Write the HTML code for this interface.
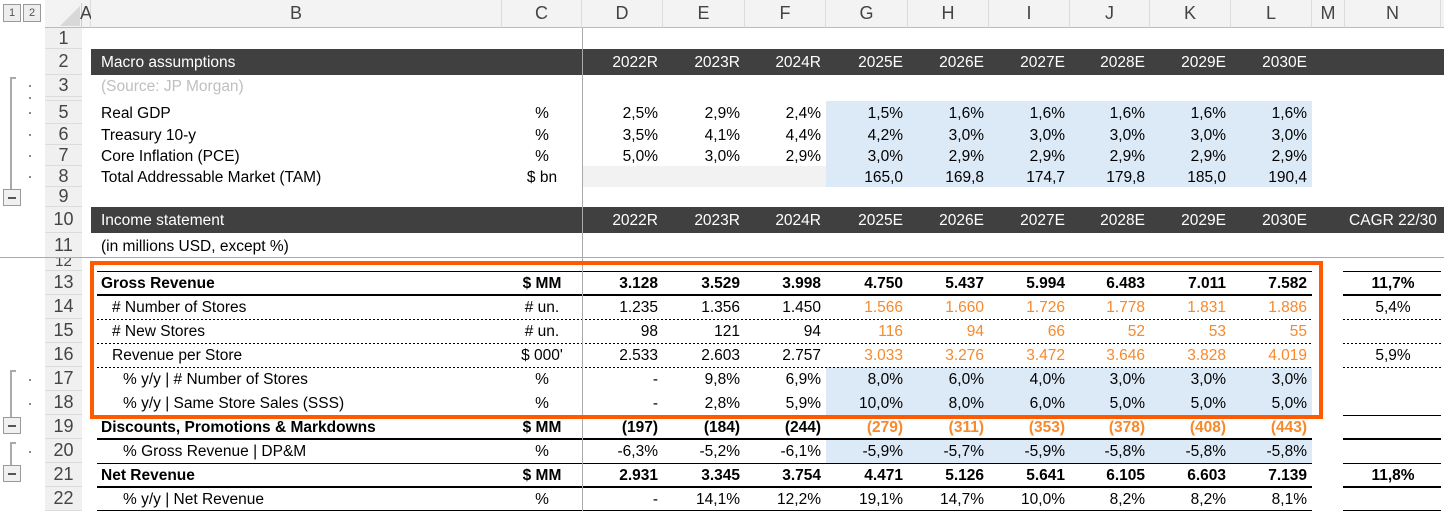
<!DOCTYPE html>
<html><head><meta charset="utf-8"><style>
*{margin:0;padding:0;box-sizing:border-box}
body{width:1444px;height:511px;overflow:hidden;background:#fff;font-family:"Liberation Sans",Arial,sans-serif;font-size:15.5px;color:#000;position:relative}
.a{position:absolute}
.r{position:absolute;left:0;width:1444px}
.r span{position:absolute;top:1px;height:100%;display:flex;align-items:center;white-space:nowrap}
.b{left:101px}.b2{left:112px}.b3{left:123px}
.c{left:502px;width:80px;justify-content:center}
.d,.e,.f,.g,.h,.i,.j,.k,.l{justify-content:flex-end;width:78px}
.d{left:580px}.e{left:662px}.f{left:743px}.g{left:825px}.h{left:906px}.i{left:987px}.j{left:1067px}.k{left:1148px}.l{left:1229px}
.n{left:1345px;width:96px;justify-content:center}
.bo{font-weight:bold}
.o{color:#f7892b}
.gr{color:#bfbfbf}
.w{color:#fff}
.rh{position:absolute;left:45px;width:37px;text-align:center;color:#444;font-size:18px;background:#f0f0f0;border-bottom:1px solid #dcdcdc;display:flex;align-items:center;justify-content:center;overflow:hidden}
.ch{position:absolute;top:0;height:28px;color:#444;font-size:18px;display:flex;align-items:center;justify-content:center;border-right:1px solid #dcdcdc;background:#f3f3f3;border-bottom:1px solid #bbb}
.ln{position:absolute;height:0}
.t1{border-top:1px solid #000}.t2{border-top:2px solid #000}
.dt{height:1px;background:repeating-linear-gradient(90deg,#000 0 2px,transparent 2px 4px)}
.btn{position:absolute;left:3px;width:18px;height:17px;border:1px solid #999;background:#f0f0f0}
.btn:after{content:"";position:absolute;left:4px;top:7px;width:8px;height:2px;background:#555}
.dot{position:absolute;left:29px;width:2px;height:2px;background:#888}
</style></head><body>
<div class="a" style="left:0;top:0;width:1444px;height:28px;background:#f3f3f3;border-bottom:1px solid #bbb"></div>
<div class="a" style="left:0;top:0;width:45px;height:28px;background:#fff"></div>
<div class="a" style="left:3px;top:4px;width:18px;height:18px;border:1px solid #999;background:#eee;font-size:11px;color:#555;text-align:center;line-height:16px">1</div>
<div class="a" style="left:23px;top:4px;width:18px;height:18px;border:1px solid #999;background:#eee;font-size:11px;color:#555;text-align:center;line-height:16px">2</div>
<svg class="a" style="left:58px;top:6px" width="22" height="20"><polygon points="22,0 22,20 2,20" fill="#d8d8d8"/></svg>
<div class="a" style="left:81px;top:3px;width:1px;height:25px;background:#ccc"></div>
<div class="ch" style="left:82px;width:9px">A</div>
<div class="ch" style="left:91px;width:411px">B</div>
<div class="ch" style="left:502px;width:80px">C</div>
<div class="ch" style="left:582px;width:81px">D</div>
<div class="ch" style="left:663px;width:82px">E</div>
<div class="ch" style="left:745px;width:81px">F</div>
<div class="ch" style="left:826px;width:82px">G</div>
<div class="ch" style="left:908px;width:81px">H</div>
<div class="ch" style="left:989px;width:81px">I</div>
<div class="ch" style="left:1070px;width:80px">J</div>
<div class="ch" style="left:1150px;width:81px">K</div>
<div class="ch" style="left:1231px;width:81px">L</div>
<div class="ch" style="left:1312px;width:33px">M</div>
<div class="ch" style="left:1345px;width:96px">N</div>

<div class="a" style="left:45px;top:28px;width:37px;height:483px;background:#f0f0f0;border-right:1px solid #bbb"></div>
<div class="rh" style="top:28px;height:21px">1</div>
<div class="rh" style="top:49px;height:26px">2</div>
<div class="rh" style="top:75px;height:22px">3</div>
<div class="rh" style="top:97px;height:4px"></div>
<div class="rh" style="top:101px;height:23px">5</div>
<div class="rh" style="top:124px;height:21px">6</div>
<div class="rh" style="top:145px;height:21px">7</div>
<div class="rh" style="top:166px;height:21px">8</div>
<div class="rh" style="top:187px;height:20px">9</div>
<div class="rh" style="top:207px;height:26px">10</div>
<div class="rh" style="top:233px;height:25px">11</div>
<div class="rh" style="top:258px;height:13px;font-size:15px;align-items:flex-end">12</div>
<div class="rh" style="top:271px;height:24px">13</div>
<div class="rh" style="top:295px;height:24px">14</div>
<div class="rh" style="top:319px;height:24px">15</div>
<div class="rh" style="top:343px;height:24px">16</div>
<div class="rh" style="top:367px;height:24px">17</div>
<div class="rh" style="top:391px;height:24px">18</div>
<div class="rh" style="top:415px;height:24px">19</div>
<div class="rh" style="top:439px;height:24px">20</div>
<div class="rh" style="top:463px;height:24px">21</div>
<div class="rh" style="top:487px;height:24px">22</div>

<div class="a" style="left:10px;top:77px;width:6px;height:120px;border-left:2px solid #aaa;border-top:2px solid #aaa"></div>
<div class="dot" style="top:85px"></div><div class="dot" style="top:97px"></div><div class="dot" style="top:112px"></div><div class="dot" style="top:134px"></div><div class="dot" style="top:155px"></div><div class="dot" style="top:176px"></div>
<div class="btn" style="top:189px"></div>
<div class="a" style="left:10px;top:370px;width:6px;height:47px;border-left:2px solid #aaa;border-top:2px solid #aaa"></div>
<div class="dot" style="top:379px"></div><div class="dot" style="top:403px"></div>
<div class="btn" style="top:417px"></div>
<div class="a" style="left:10px;top:442px;width:6px;height:23px;border-left:2px solid #aaa;border-top:2px solid #aaa"></div>
<div class="dot" style="top:451px"></div>
<div class="btn" style="top:465px"></div>

<div class="a" style="left:91px;top:49px;width:1353px;height:26px;background:#404040"></div>
<div class="a" style="left:91px;top:207px;width:1353px;height:26px;background:#404040"></div>
<div class="a" style="left:826px;top:101px;width:486px;height:86px;background:#dce9f7"></div>
<div class="a" style="left:582px;top:166px;width:244px;height:21px;background:#f2f2f2"></div>
<div class="a" style="left:826px;top:367px;width:486px;height:48px;background:#dce9f7"></div>
<div class="a" style="left:826px;top:439px;width:486px;height:24px;background:#dce9f7"></div>

<div class="ln t1" style="left:97px;top:271px;width:1215px"></div><div class="ln t1" style="left:1343px;top:271px;width:98px"></div>
<div class="ln t2" style="left:97px;top:294px;width:1215px"></div><div class="ln t2" style="left:1343px;top:294px;width:98px"></div>
<div class="ln dt" style="left:97px;top:319px;width:1215px"></div><div class="ln dt" style="left:1343px;top:319px;width:98px"></div>
<div class="ln dt" style="left:97px;top:343px;width:1215px"></div><div class="ln dt" style="left:1343px;top:343px;width:98px"></div>
<div class="ln dt" style="left:97px;top:367px;width:1215px"></div><div class="ln dt" style="left:1343px;top:367px;width:98px"></div>
<div class="ln t1" style="left:97px;top:415px;width:1215px"></div><div class="ln t1" style="left:1343px;top:415px;width:98px"></div>
<div class="ln t2" style="left:97px;top:438px;width:1215px"></div><div class="ln t2" style="left:1343px;top:438px;width:98px"></div>
<div class="ln t1" style="left:97px;top:463px;width:1215px"></div><div class="ln t1" style="left:1343px;top:463px;width:98px"></div>
<div class="ln t2" style="left:97px;top:486px;width:1215px"></div><div class="ln t2" style="left:1343px;top:486px;width:98px"></div>
<div class="ln t1" style="left:97px;top:510px;width:1215px"></div><div class="ln t1" style="left:1343px;top:510px;width:98px"></div>

<div class="a" style="left:582px;top:28px;width:1px;height:483px;background:#aaa"></div>
<div class="a" style="left:0;top:257px;width:1444px;height:1px;background:#aaa"></div>

<div class="r w" style="top:49px;height:26px"><span class="b">Macro assumptions</span><span class="d">2022R</span><span class="e">2023R</span><span class="f">2024R</span><span class="g">2025E</span><span class="h">2026E</span><span class="i">2027E</span><span class="j">2028E</span><span class="k">2029E</span><span class="l">2030E</span></div>
<div class="r gr" style="top:75px;height:22px"><span class="b">(Source: JP Morgan)</span></div>
<div class="r" style="top:101px;height:23px"><span class="b">Real GDP</span><span class="c">%</span><span class="d">2,5%</span><span class="e">2,9%</span><span class="f">2,4%</span><span class="g">1,5%</span><span class="h">1,6%</span><span class="i">1,6%</span><span class="j">1,6%</span><span class="k">1,6%</span><span class="l">1,6%</span></div>
<div class="r" style="top:124px;height:21px"><span class="b">Treasury 10-y</span><span class="c">%</span><span class="d">3,5%</span><span class="e">4,1%</span><span class="f">4,4%</span><span class="g">4,2%</span><span class="h">3,0%</span><span class="i">3,0%</span><span class="j">3,0%</span><span class="k">3,0%</span><span class="l">3,0%</span></div>
<div class="r" style="top:145px;height:21px"><span class="b">Core Inflation (PCE)</span><span class="c">%</span><span class="d">5,0%</span><span class="e">3,0%</span><span class="f">2,9%</span><span class="g">3,0%</span><span class="h">2,9%</span><span class="i">2,9%</span><span class="j">2,9%</span><span class="k">2,9%</span><span class="l">2,9%</span></div>
<div class="r" style="top:166px;height:21px"><span class="b">Total Addressable Market (TAM)</span><span class="c">$ bn</span><span class="g">165,0</span><span class="h">169,8</span><span class="i">174,7</span><span class="j">179,8</span><span class="k">185,0</span><span class="l">190,4</span></div>
<div class="r w" style="top:207px;height:26px"><span class="b">Income statement</span><span class="d">2022R</span><span class="e">2023R</span><span class="f">2024R</span><span class="g">2025E</span><span class="h">2026E</span><span class="i">2027E</span><span class="j">2028E</span><span class="k">2029E</span><span class="l">2030E</span><span class="n">CAGR 22/30</span></div>
<div class="r" style="top:233px;height:25px"><span class="b">(in millions USD, except %)</span></div>

<div class="r bo" style="top:271px;height:24px"><span class="b">Gross Revenue</span><span class="c">$ MM</span><span class="d">3.128</span><span class="e">3.529</span><span class="f">3.998</span><span class="g">4.750</span><span class="h">5.437</span><span class="i">5.994</span><span class="j">6.483</span><span class="k">7.011</span><span class="l">7.582</span><span class="n">11,7%</span></div>
<div class="r" style="top:295px;height:24px"><span class="b2"># Number of Stores</span><span class="c"># un.</span><span class="d">1.235</span><span class="e">1.356</span><span class="f">1.450</span><span class="g o">1.566</span><span class="h o">1.660</span><span class="i o">1.726</span><span class="j o">1.778</span><span class="k o">1.831</span><span class="l o">1.886</span><span class="n">5,4%</span></div>
<div class="r" style="top:319px;height:24px"><span class="b2"># New Stores</span><span class="c"># un.</span><span class="d">98</span><span class="e">121</span><span class="f">94</span><span class="g o">116</span><span class="h o">94</span><span class="i o">66</span><span class="j o">52</span><span class="k o">53</span><span class="l o">55</span></div>
<div class="r" style="top:343px;height:24px"><span class="b2">Revenue per Store</span><span class="c">$ 000'</span><span class="d">2.533</span><span class="e">2.603</span><span class="f">2.757</span><span class="g o">3.033</span><span class="h o">3.276</span><span class="i o">3.472</span><span class="j o">3.646</span><span class="k o">3.828</span><span class="l o">4.019</span><span class="n">5,9%</span></div>
<div class="r" style="top:367px;height:24px"><span class="b3">% y/y | # Number of Stores</span><span class="c">%</span><span class="d">-</span><span class="e">9,8%</span><span class="f">6,9%</span><span class="g">8,0%</span><span class="h">6,0%</span><span class="i">4,0%</span><span class="j">3,0%</span><span class="k">3,0%</span><span class="l">3,0%</span></div>
<div class="r" style="top:391px;height:24px"><span class="b3">% y/y | Same Store Sales (SSS)</span><span class="c">%</span><span class="d">-</span><span class="e">2,8%</span><span class="f">5,9%</span><span class="g">10,0%</span><span class="h">8,0%</span><span class="i">6,0%</span><span class="j">5,0%</span><span class="k">5,0%</span><span class="l">5,0%</span></div>
<div class="r bo" style="top:415px;height:24px"><span class="b">Discounts, Promotions &amp; Markdowns</span><span class="c">$ MM</span><span class="d">(197)</span><span class="e">(184)</span><span class="f">(244)</span><span class="g o">(279)</span><span class="h o">(311)</span><span class="i o">(353)</span><span class="j o">(378)</span><span class="k o">(408)</span><span class="l o">(443)</span></div>
<div class="r" style="top:439px;height:24px"><span class="b3">% Gross Revenue | DP&amp;M</span><span class="c">%</span><span class="d">-6,3%</span><span class="e">-5,2%</span><span class="f">-6,1%</span><span class="g">-5,9%</span><span class="h">-5,7%</span><span class="i">-5,9%</span><span class="j">-5,8%</span><span class="k">-5,8%</span><span class="l">-5,8%</span></div>
<div class="r bo" style="top:463px;height:24px"><span class="b">Net Revenue</span><span class="c">$ MM</span><span class="d">2.931</span><span class="e">3.345</span><span class="f">3.754</span><span class="g">4.471</span><span class="h">5.126</span><span class="i">5.641</span><span class="j">6.105</span><span class="k">6.603</span><span class="l">7.139</span><span class="n">11,8%</span></div>
<div class="r" style="top:487px;height:24px"><span class="b3">% y/y | Net Revenue</span><span class="c">%</span><span class="d">-</span><span class="e">14,1%</span><span class="f">12,2%</span><span class="g">19,1%</span><span class="h">14,7%</span><span class="i">10,0%</span><span class="j">8,2%</span><span class="k">8,2%</span><span class="l">8,1%</span></div>

<div class="a" style="left:90px;top:261px;width:1233px;height:158px;border:4px solid #ff5a00"></div>
</body></html>
